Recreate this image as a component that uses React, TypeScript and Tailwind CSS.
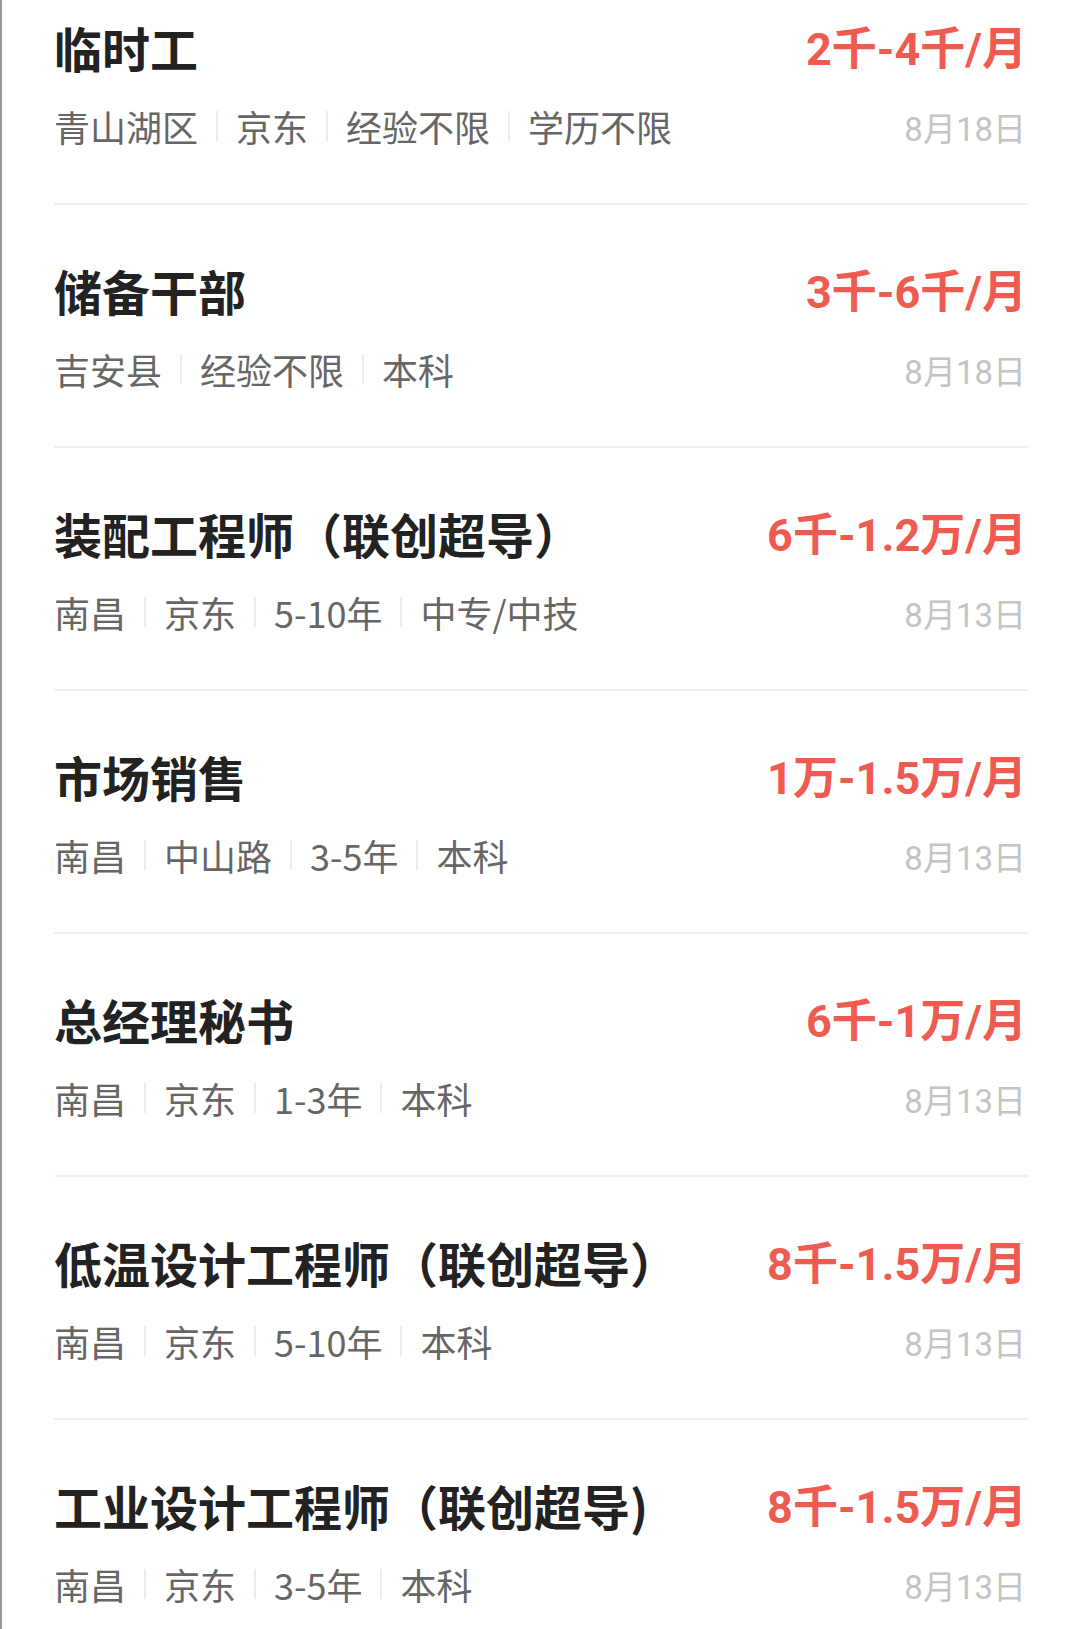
import React from 'react';

interface Job {
  title: string;
  salary: string;
  tags: string[];
  date: string;
}

const jobs: Job[] = [
  { title: '临时工', salary: '2千-4千/月', tags: ['青山湖区', '京东', '经验不限', '学历不限'], date: '8月18日' },
  { title: '储备干部', salary: '3千-6千/月', tags: ['吉安县', '经验不限', '本科'], date: '8月18日' },
  { title: '装配工程师（联创超导）', salary: '6千-1.2万/月', tags: ['南昌', '京东', '5-10年', '中专/中技'], date: '8月13日' },
  { title: '市场销售', salary: '1万-1.5万/月', tags: ['南昌', '中山路', '3-5年', '本科'], date: '8月13日' },
  { title: '总经理秘书', salary: '6千-1万/月', tags: ['南昌', '京东', '1-3年', '本科'], date: '8月13日' },
  { title: '低温设计工程师（联创超导）', salary: '8千-1.5万/月', tags: ['南昌', '京东', '5-10年', '本科'], date: '8月13日' },
  { title: '工业设计工程师（联创超导)', salary: '8千-1.5万/月', tags: ['南昌', '京东', '3-5年', '本科'], date: '8月13日' },
];

const cjk = "font-['Noto_Sans_CJK_SC',sans-serif]";

const JobRow: React.FC<{ job: Job }> = ({ job }) => (
  <div className="border-b-2 border-[#f0f0f0] pt-[57px] pb-[55px]">
    <div className="flex items-center justify-between h-[56px]">
      <h3 className={`${cjk} text-[48px] leading-[56px] font-bold text-[#222222]`}>{job.title}</h3>
      <span className="pt-[6px] font-['Roboto','Noto_Sans_CJK_SC',sans-serif] text-[45px] leading-[56px] font-bold text-[#ef5b51] mr-[1px]">
        {job.salary}
      </span>
    </div>
    <div className="mt-[29px] flex items-center justify-between h-[44px]">
      <div className={`${cjk} flex items-center text-[36px] leading-[44px] text-[#666666]`}>
        {job.tags.map((t, i) => (
          <React.Fragment key={i}>
            {i > 0 && <span className="mx-[18px] h-[30px] w-[2px] bg-[#ececec]" />}
            <span>{t}</span>
          </React.Fragment>
        ))}
      </div>
      <span className="pt-[8px] font-['Roboto','Noto_Sans_CJK_SC',sans-serif] text-[33px] leading-[44px] text-[#c4c4c4] mr-[2px]">
        {job.date}
      </span>
    </div>
  </div>
);

export default function App() {
  return (
    <div className="w-[1080px] h-[1629px] overflow-hidden bg-white border-l-2 border-[#9a9a9a]">
      <div className="-mt-[38px] pl-[52px] pr-[52px]">
        {jobs.map((job, i) => (
          <JobRow key={i} job={job} />
        ))}
      </div>
    </div>
  );
}
